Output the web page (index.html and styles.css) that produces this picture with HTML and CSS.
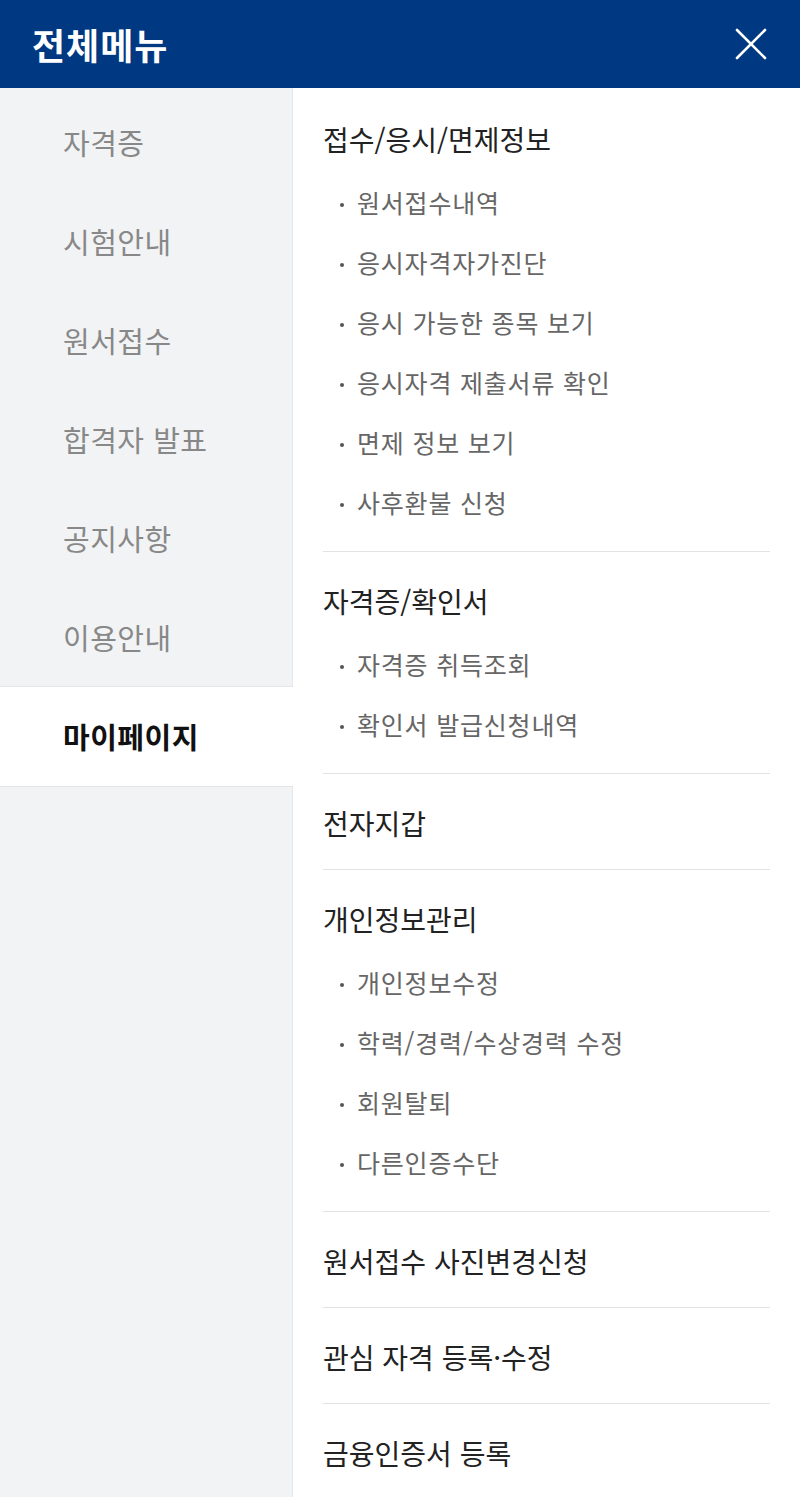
FILE: index.html
```html
<!DOCTYPE html>
<html lang="ko">
<head>
<meta charset="utf-8">
<title>전체메뉴</title>
<link rel="stylesheet" href="styles.css">
</head>
<body>
<div class="page">
  <header class="topbar">
    <h1 class="title">전체메뉴</h1>
    <button class="close" aria-label="닫기">
      <svg width="32" height="32" viewBox="0 0 32 32"><path d="M2 2 L30 30 M30 2 L2 30" stroke="#fff" stroke-width="2.6" stroke-linecap="round" fill="none"/></svg>
    </button>
  </header>
  <div class="body">
    <nav class="side">
      <a class="side-item">자격증</a>
      <a class="side-item">시험안내</a>
      <a class="side-item">원서접수</a>
      <a class="side-item">합격자 발표</a>
      <a class="side-item">공지사항</a>
      <a class="side-item">이용안내</a>
      <a class="side-item active">마이페이지</a>
    </nav>
    <div class="main">
      <section class="group first">
        <h2 class="group-title">접수/응시/면제정보</h2>
        <ul class="sub">
          <li>원서접수내역</li>
          <li>응시자격자가진단</li>
          <li>응시 가능한 종목 보기</li>
          <li>응시자격 제출서류 확인</li>
          <li>면제 정보 보기</li>
          <li>사후환불 신청</li>
        </ul>
      </section>
      <section class="group">
        <h2 class="group-title">자격증/확인서</h2>
        <ul class="sub">
          <li>자격증 취득조회</li>
          <li>확인서 발급신청내역</li>
        </ul>
      </section>
      <section class="group">
        <h2 class="group-title">전자지갑</h2>
      </section>
      <section class="group">
        <h2 class="group-title">개인정보관리</h2>
        <ul class="sub">
          <li>개인정보수정</li>
          <li>학력/경력/수상경력 수정</li>
          <li>회원탈퇴</li>
          <li>다른인증수단</li>
        </ul>
      </section>
      <section class="group">
        <h2 class="group-title">원서접수 사진변경신청</h2>
      </section>
      <section class="group">
        <h2 class="group-title">관심 자격 등록·수정</h2>
      </section>
      <section class="group">
        <h2 class="group-title">금융인증서 등록</h2>
      </section>
    </div>
  </div>
</div>
</body>
</html>
```
FILE: styles.css
```css
* { box-sizing: border-box; }
html, body { margin: 0; padding: 0; }
body {
  font-family: "Noto Sans CJK KR", "Noto Sans", sans-serif;
  background: #fff;
  color: #222;
}
.page {
  width: 800px;
  min-height: 1497px;
  display: flex;
  flex-direction: column;
}
.topbar {
  height: 88px;
  background: #003882;
  display: flex;
  align-items: center;
  justify-content: space-between;
  padding: 0 33px 0 32px;
}
.title {
  margin: 0;
  color: #fff;
  font-size: 36px;
  font-weight: 700;
  letter-spacing: 1px;
  line-height: 1;
}
.close {
  background: none;
  border: 0;
  padding: 0;
  width: 32px;
  height: 32px;
  display: flex;
}
.body {
  flex: 1;
  display: flex;
}
.side {
  width: 293px;
  flex-shrink: 0;
  background: #f2f3f5;
  border-right: 1px solid #e6e7ea;
  padding-top: 4px;
  display: flex;
  flex-direction: column;
}
.side-item {
  height: 99px;
  display: flex;
  align-items: center;
  padding-left: 63px;
  font-size: 29px;
  color: #888;
  letter-spacing: 0.5px;
}
.side-item.active {
  background: #fff;
  color: #111;
  font-weight: 700;
  border-top: 1px solid #e4e5e8;
  border-bottom: 1px solid #e4e5e8;
  margin-right: -1px;
  height: 101px;
  padding-bottom: 2px;
}
.main {
  flex: 1;
  padding: 0 30px 0 30px;
}
.group {
  padding: 31px 0 28px;
  border-bottom: 1px solid #e3e3e3;
}
.group.first { padding-top: 33px; }
.group:last-child { border-bottom: 0; }
.group-title {
  margin: 0;
  font-size: 28px;
  font-weight: 400;
  line-height: 36px;
  color: #222;
  letter-spacing: 0;
}
.sub {
  list-style: none;
  margin: 24px 0 0;
  padding: 0;
  display: flex;
  flex-direction: column;
  gap: 18px;
}
.sub li {
  line-height: 42px;
  font-size: 25px;
  color: #666;
  padding-left: 34px;
  display: flex;
  align-items: center;
  letter-spacing: 0.8px;
}
.sub li::before {
  content: "";
  width: 4px;
  height: 4px;
  border-radius: 50%;
  background: #555;
  margin-left: -17px;
  margin-right: 13px;
  margin-top: 6px;
}
```
